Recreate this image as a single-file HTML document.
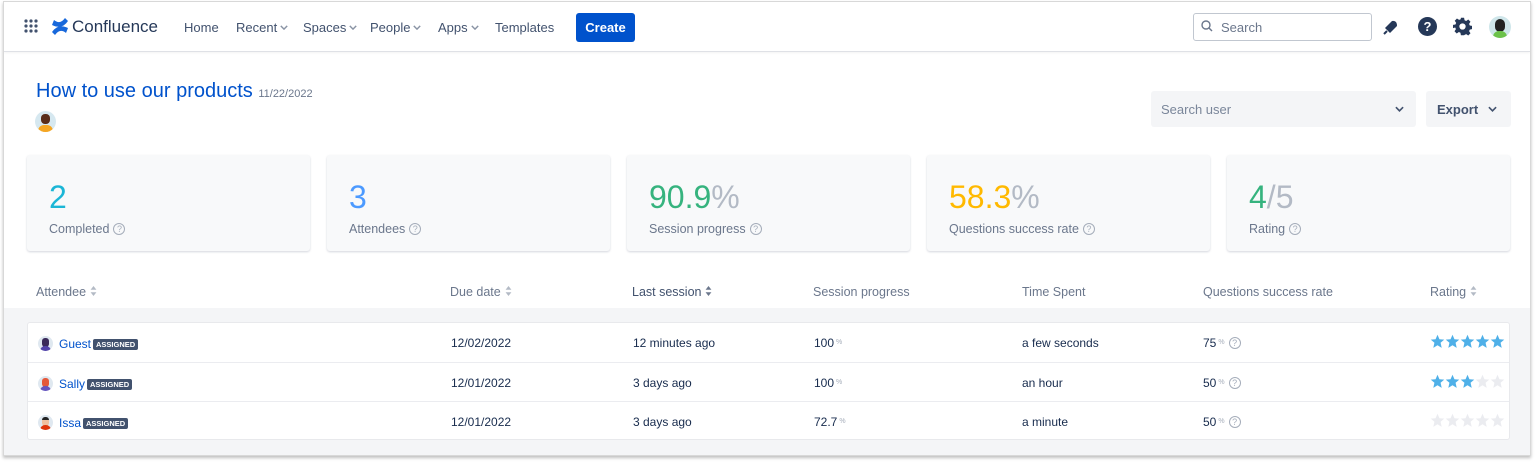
<!DOCTYPE html>
<html><head><meta charset="utf-8"><style>
*{box-sizing:border-box;margin:0;padding:0}
body{width:1536px;height:462px;background:#fff;font-family:"Liberation Sans",sans-serif;position:relative;overflow:hidden;color:#172b4d}
.frame{position:absolute;left:3px;top:1px;width:1528px;height:455px;border:1px solid #d8d8d8;box-shadow:0 2px 3px rgba(0,0,0,.25);overflow:hidden;background:#fff}
.nav{position:absolute;left:0;top:0;width:100%;height:50px;border-bottom:1px solid #dfe1e6;box-shadow:0 1px 2px rgba(0,0,0,.05)}
.abs{position:absolute}
.navitem{position:absolute;top:18px;font-size:13px;color:#42526e}
.chev{display:inline-block;vertical-align:2px;margin-left:3px}
.create{position:absolute;left:572px;top:11px;width:59px;height:29px;background:#0052cc;color:#fff;border-radius:3px;font-size:13px;font-weight:bold;text-align:center;line-height:29px}
.search{position:absolute;left:1189px;top:11px;width:179px;height:28px;border:1px solid #c1c7d0;border-radius:3px;font-size:13px;color:#6b778c;padding:6px 0 0 27px}
.card{position:absolute;top:153px;width:283px;height:96px;background:#f8f9fa;border-radius:3px;box-shadow:0 1px 2px rgba(9,30,66,.18)}
.card .n{position:absolute;left:22px;top:22px;font-size:32px;line-height:40px}
.card .l{position:absolute;left:22px;top:67px;font-size:12.5px;color:#6b778c}
.q{display:inline-block;width:12px;height:12px;border:1px solid #a5adba;border-radius:50%;font-size:9px;line-height:10px;text-align:center;color:#a5adba;vertical-align:1px;margin-left:4px}
.th{position:absolute;top:283px;font-size:12.5px;color:#6b778c}
.sort{display:inline-block;vertical-align:0;margin-left:4px}
.gray{position:absolute;left:0;top:306px;width:100%;height:150px;background:#f4f5f7}
.table{position:absolute;left:23px;top:320px;width:1483px;height:118px;background:#fff;border:1px solid #e8e9ec;border-radius:3px}
.row{position:absolute;left:0;width:100%;height:39px;border-top:1px solid #ebecf0}
.td{position:absolute;top:13px;font-size:12px;color:#172b4d}
.name{color:#0052cc;font-size:12px}
.badge{display:inline-block;background:#42526e;color:#fff;font-size:7.5px;font-weight:bold;padding:1px 3px;border-radius:2px;vertical-align:1px;margin-left:2px}
.pct{font-size:7px;color:#a5adba;vertical-align:3px;margin-left:2px}
.av{display:inline-block;width:15px;height:15px;border-radius:50%;background:#dfe8f0;vertical-align:-3px;margin-right:6px;position:relative;overflow:hidden}
.stars{position:absolute;left:1402px;top:11px;height:15px}
</style></head><body>
<svg width="0" height="0" style="position:absolute"><defs>
<symbol id="st" viewBox="0 0 20 20"><polygon points="10,1 12.6,7 19,7.5 14.1,11.7 15.6,18.5 10,15 4.4,18.5 5.9,11.7 1,7.5 7.4,7"/></symbol>
<symbol id="so" viewBox="0 0 8 12"><path d="M4 0L7.5 4.5H0.5Z M4 12L7.5 7.5H0.5Z"/></symbol>
<symbol id="cv" viewBox="0 0 10 6"><path d="M1 1L5 5L9 1" fill="none" stroke-width="1.8"/></symbol>
</defs></svg>
<div class="frame">
<div class="nav">
 <svg class="abs" style="left:20px;top:17px" width="14" height="14"><g fill="#42526e"><circle cx="2" cy="2" r="1.6"/><circle cx="7" cy="2" r="1.6"/><circle cx="12" cy="2" r="1.6"/><circle cx="2" cy="7" r="1.6"/><circle cx="7" cy="7" r="1.6"/><circle cx="12" cy="7" r="1.6"/><circle cx="2" cy="12" r="1.6"/><circle cx="7" cy="12" r="1.6"/><circle cx="12" cy="12" r="1.6"/></g></svg>
 <svg class="abs" style="left:47px;top:16px" width="18" height="17"><path d="M1 14 Q7 5 17 10 L15 15 Q9 10 4 17Z M17 3 Q11 12 1 7 L3 2 Q9 7 14 0Z" fill="#1868db"/></svg>
 <div class="abs" style="left:68px;top:15px;font-size:17px;color:#253858">Confluence</div>
 <div class="navitem" style="left:180px">Home</div>
 <div class="navitem" style="left:232px">Recent<svg class="chev" width="8" height="5" stroke="#8993a4"><use href="#cv"/></svg></div>
 <div class="navitem" style="left:299px">Spaces<svg class="chev" width="8" height="5" stroke="#8993a4"><use href="#cv"/></svg></div>
 <div class="navitem" style="left:366px">People<svg class="chev" width="8" height="5" stroke="#8993a4"><use href="#cv"/></svg></div>
 <div class="navitem" style="left:434px">Apps<svg class="chev" width="8" height="5" stroke="#8993a4"><use href="#cv"/></svg></div>
 <div class="navitem" style="left:491px">Templates</div>
 <div class="create">Create</div>
 <div class="search">Search</div>
 <svg class="abs" style="left:1197px;top:18px" width="12" height="12"><circle cx="5" cy="5" r="4" fill="none" stroke="#6b778c" stroke-width="1.4"/><path d="M8 8l3 3" stroke="#6b778c" stroke-width="1.4"/></svg>
 <svg class="abs" style="left:1378px;top:16px" width="17" height="17"><path d="M3 10 L10 3 Q15 2 15 8 L8 15Z" fill="#253858"/><path d="M5 13l-3 3" stroke="#253858" stroke-width="2"/></svg>
 <div class="abs" style="left:1414px;top:15px;width:19px;height:19px;border-radius:50%;background:#253858;color:#fff;font-weight:bold;font-size:13px;text-align:center;line-height:19px">?</div>
 <svg class="abs" style="left:1449px;top:15px" width="19" height="19" viewBox="0 0 24 24"><path fill="#253858" fill-rule="evenodd" d="M10 1h4l.6 3.1 2 .9 2.7-1.8 2.8 2.8-1.8 2.7.9 2 3.1.6v4l-3.1.6-.9 2 1.8 2.7-2.8 2.8-2.7-1.8-2 .9L14 23h-4l-.6-3.1-2-.9-2.7 1.8-2.8-2.8 1.8-2.7-.9-2L0 14v-4l3.1-.6.9-2L2.2 4.7 5 1.9l2.7 1.8 2-.9zM12 8a4 4 0 100 8 4 4 0 000-8z"/></svg>
 <div class="abs" style="left:1485px;top:14px;width:22px;height:22px;border-radius:50%;background:#cfe6ea;overflow:hidden"><div style="position:absolute;left:6px;top:3px;width:10px;height:13px;border-radius:5px;background:#222"></div><div style="position:absolute;left:4px;top:15px;width:14px;height:8px;border-radius:6px 6px 0 0;background:#6cc24a"></div></div>
</div>
<div class="abs" style="left:32px;top:78px;font-size:20px;color:#0052cc">How to use our products <span style="font-size:11px;color:#6b778c">11/22/2022</span></div>
<div class="abs" style="left:31px;top:109px;width:21px;height:21px;border-radius:50%;background:#d6e8f0;overflow:hidden"><div style="position:absolute;left:6px;top:3px;width:9px;height:10px;border-radius:4px;background:#5a2d1a"></div><div style="position:absolute;left:3px;top:14px;width:15px;height:8px;border-radius:6px 6px 0 0;background:#f5a623"></div></div>
<div class="abs" style="left:1147px;top:89px;width:265px;height:36px;background:#f4f5f7;border-radius:3px;font-size:13px;color:#7a869a;padding:11px 0 0 10px">Search user<svg style="position:absolute;right:12px;top:15px" width="9" height="6" stroke="#42526e"><use href="#cv"/></svg></div>
<div class="abs" style="left:1422px;top:89px;width:85px;height:36px;background:#f4f5f7;border-radius:3px;font-size:13px;color:#42526e;font-weight:bold;padding:11px 0 0 11px">Export<svg style="position:absolute;right:14px;top:15px" width="9" height="6" stroke="#42526e"><use href="#cv"/></svg></div>

<div class="card" style="left:23px"><div class="n" style="color:#1bb6d6">2</div><div class="l">Completed<span class="q">?</span></div></div>
<div class="card" style="left:323px"><div class="n" style="color:#4c9aff">3</div><div class="l">Attendees<span class="q">?</span></div></div>
<div class="card" style="left:623px"><div class="n" style="color:#36b37e">90.9<span style="color:#b3bac5">%</span></div><div class="l">Session progress<span class="q">?</span></div></div>
<div class="card" style="left:923px"><div class="n" style="color:#ffb900">58.3<span style="color:#b3bac5">%</span></div><div class="l">Questions success rate<span class="q">?</span></div></div>
<div class="card" style="left:1223px"><div class="n" style="color:#36b37e">4<span style="color:#b3bac5">/5</span></div><div class="l">Rating<span class="q">?</span></div></div>

<div class="th" style="left:32px">Attendee<svg class="sort" width="7" height="10" fill="#b3bac5"><use href="#so"/></svg></div>
<div class="th" style="left:446px">Due date<svg class="sort" width="7" height="10" fill="#b3bac5"><use href="#so"/></svg></div>
<div class="th" style="left:628px;color:#42526e">Last session<svg class="sort" width="7" height="10" fill="#6b778c"><use href="#so"/></svg></div>
<div class="th" style="left:809px">Session progress</div>
<div class="th" style="left:1018px">Time Spent</div>
<div class="th" style="left:1199px">Questions success rate</div>
<div class="th" style="left:1426px">Rating<svg class="sort" width="7" height="10" fill="#b3bac5"><use href="#so"/></svg></div>

<div class="gray"></div>
<div class="table">
 <div class="row" style="top:0;border-top:none">
  <div class="td" style="left:10px"><span class="av"><i style="position:absolute;left:4px;top:2px;width:7px;height:9px;border-radius:3px;background:#3a2a5a"></i><i style="position:absolute;left:2px;top:10px;width:11px;height:6px;border-radius:5px 5px 0 0;background:#5243aa"></i></span><span class="name">Guest</span><span class="badge">ASSIGNED</span></div>
  <div class="td" style="left:423px">12/02/2022</div><div class="td" style="left:605px">12 minutes ago</div><div class="td" style="left:786px">100<span class="pct">%</span></div><div class="td" style="left:994px">a few seconds</div><div class="td" style="left:1175px">75<span class="pct">%</span><span class="q">?</span></div>
  <svg class="stars" width="76" height="15"><g fill="#4fb0e8"><use href="#st" x="0" width="15" height="15"/><use href="#st" x="15" width="15" height="15"/><use href="#st" x="30" width="15" height="15"/><use href="#st" x="45" width="15" height="15"/><use href="#st" x="60" width="15" height="15"/></g></svg>
 </div>
 <div class="row" style="top:39px">
  <div class="td" style="left:10px"><span class="av"><i style="position:absolute;left:4px;top:2px;width:7px;height:9px;border-radius:3px;background:#e5583a"></i><i style="position:absolute;left:2px;top:10px;width:11px;height:6px;border-radius:5px 5px 0 0;background:#6554c0"></i></span><span class="name">Sally</span><span class="badge">ASSIGNED</span></div>
  <div class="td" style="left:423px">12/01/2022</div><div class="td" style="left:605px">3 days ago</div><div class="td" style="left:786px">100<span class="pct">%</span></div><div class="td" style="left:994px">an hour</div><div class="td" style="left:1175px">50<span class="pct">%</span><span class="q">?</span></div>
  <svg class="stars" width="76" height="15"><g fill="#4fb0e8"><use href="#st" x="0" width="15" height="15"/><use href="#st" x="15" width="15" height="15"/><use href="#st" x="30" width="15" height="15"/></g><g fill="#ebecf0"><use href="#st" x="45" width="15" height="15"/><use href="#st" x="60" width="15" height="15"/></g></svg>
 </div>
 <div class="row" style="top:78px">
  <div class="td" style="left:10px"><span class="av"><i style="position:absolute;left:4px;top:2px;width:7px;height:9px;border-radius:3px;background:#f0c0a0;border-top:3px solid #222"></i><i style="position:absolute;left:2px;top:10px;width:11px;height:6px;border-radius:5px 5px 0 0;background:#de350b"></i></span><span class="name">Issa</span><span class="badge">ASSIGNED</span></div>
  <div class="td" style="left:423px">12/01/2022</div><div class="td" style="left:605px">3 days ago</div><div class="td" style="left:786px">72.7<span class="pct">%</span></div><div class="td" style="left:994px">a minute</div><div class="td" style="left:1175px">50<span class="pct">%</span><span class="q">?</span></div>
  <svg class="stars" width="76" height="15"><g fill="#ebecf0"><use href="#st" x="0" width="15" height="15"/><use href="#st" x="15" width="15" height="15"/><use href="#st" x="30" width="15" height="15"/><use href="#st" x="45" width="15" height="15"/><use href="#st" x="60" width="15" height="15"/></g></svg>
 </div>
</div>
</div>
</body></html>
